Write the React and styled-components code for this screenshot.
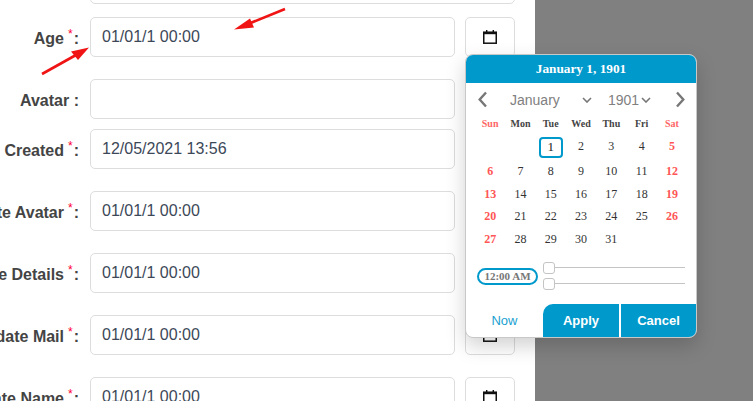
import React from "react";
import styled, { createGlobalStyle } from "styled-components";

const Global = createGlobalStyle`
  html, body { margin: 0; padding: 0; background: #fff; }
  body { width: 753px; height: 401px; overflow: hidden; font-family: "Liberation Sans", Arial, sans-serif; }
`;
const Page = styled.div`
  position: relative; display: flex; width: 753px; height: 401px; overflow: hidden; background: #808080;
`;
const Panel = styled.div`
  width: 535px; height: 401px; background: #fff; overflow: hidden; flex: none;
`;
const Form = styled.div`
  display: flex; flex-direction: column; margin-top: -36px;
`;
const Row = styled.div`
  display: flex; align-items: center; height: 40px; margin-bottom: ${p => p.$gap}px;
`;
const Label = styled.label`
  width: 79px; height: 40px; margin-right: 11px; flex: none; align-self: flex-start; display: flex; justify-content: flex-end; white-space: nowrap;
  font-size: 16px; font-weight: 700; color: #444; line-height: 44px;
`;
const Star = styled.sup`
  color: #ff0033; font-size: 12px; font-weight: 400; line-height: 0; margin-left: 4px; margin-right: 1px;
  vertical-align: 6px;
`;
const Field = styled.div`
  box-sizing: border-box; width: ${p => p.$w}px; height: 40px; border: 1px solid #ddd; border-radius: 5px;
  padding: 0 11px; font-size: 16px; line-height: 38px; color: #3c4858; background: #fff; flex: none;
`;
const IconButton = styled.button`
  box-sizing: border-box; width: 50px; height: 40px; margin-left: 10px; border: 1px solid #ddd; border-radius: 5px;
  background: #fff; padding: 0; display: flex; align-items: center; justify-content: center; flex: none;
`;
const Arrows = styled.svg`
  position: absolute; left: 0; top: 0; pointer-events: none;
`;
const Popup = styled.div`
  position: absolute; left: 465px; top: 54px; width: 232px; height: 284px; box-sizing: border-box;
  background: #fff; border: 1px solid #c8c8c8; border-radius: 8px; overflow: hidden;
  box-shadow: 0 8px 20px rgba(0,0,0,.18); display: flex; flex-direction: column;
`;
const Title = styled.div`
  height: 28px; background: #0099cc; color: #fff; text-align: center; flex: none;
  font: 700 13.3px/27px "Liberation Serif", serif;
`;
const Nav = styled.div`
  display: flex; align-items: center; height: 33px; padding: 0 11px 0 12px; color: #777; flex: none;
`;
const Chevron = styled.svg`
  flex: none; display: block;
`;
const Select = styled.div`
  display: flex; align-items: center; justify-content: space-between; width: ${p => p.$w}px; margin-left: ${p => p.$ml}px;
  font-size: 14px; color: #808080; flex: none;
`;
const Spacer = styled.div`flex: 1;`;
const Grid = styled.div`
  display: grid; grid-template-columns: repeat(7, 30.3px); grid-template-rows: 21px 27px; grid-auto-rows: 22.5px; padding: 0 9px; flex: none; margin-top: -3.5px;
  font-family: "Liberation Serif", serif; font-size: 12px; color: #333; justify-items: center; align-items: center;
`;
const Head = styled.div`
  font-size: 10px; font-weight: 700; color: ${p => p.$red ? "#ff6666" : "#444"};
`;
const Day = styled.div`
  box-sizing: border-box; width: 24px; height: 21px; display: flex; align-items: center; justify-content: center;
  ${p => p.$first && !p.$sel && "margin-top:-2px;"}
  ${p => p.$red && "color:#ff5555;font-weight:700;"}
  ${p => p.$sel && "border:2px solid #0099cc;border-radius:4px;font-size:13px;color:#222;"}
`;
const TimeRow = styled.div`
  display: flex; align-items: center; padding: 0 11px; margin-top: 9px; height: 34px; flex: none;
`;
const TimeBadge = styled.div`
  box-sizing: border-box; width: 61px; height: 17px; border: 2px solid #0099cc; border-radius: 9px; flex: none;
  text-align: center; font: 700 11px/13px "Liberation Serif", serif; color: #777; white-space: nowrap;
`;
const Sliders = styled.div`
  display: flex; flex-direction: column; gap: 4px; margin: -2px 0 0 5px; width: 143px;
`;
const Slider = styled.div`
  height: 12px; display: flex; align-items: center; position: relative;
  &::before { content: ""; flex: 1; height: 1px; background: #c4c4c4; }
`;
const Thumb = styled.div`
  position: absolute; left: 0; top: 0; box-sizing: border-box; width: 12px; height: 12px; border: 1px solid #c4c4c4;
  border-radius: 3px; background: #fff;
`;
const Footer = styled.div`
  display: flex; height: 33px; margin-top: auto; flex: none;
`;
const NowButton = styled.div`
  width: 77px; text-align: center; color: #1a9fd0; font-size: 13px; line-height: 33px;
`;
const ActionButton = styled.div`
  flex: ${p => p.$w ? `0 0 ${p.$w}px` : 1}; background: #0099cc; color: #fff; text-align: center; font-size: 13px; font-weight: 700;
  line-height: 33px; margin-left: ${p => p.$ml || 0}px; border-top-left-radius: ${p => p.$r || 0}px;
`;

const CalIcon = () => (
  <svg width="14" height="14" viewBox="0 0 14 14">
    <rect x="0.75" y="2.2" width="12.5" height="11" fill="none" stroke="#111" strokeWidth="1.5" />
    <rect x="0" y="2" width="14" height="2.2" fill="#111" />
    <rect x="3" y="0" width="1.4" height="3" fill="#111" />
    <rect x="9.6" y="0" width="1.4" height="3" fill="#111" />
  </svg>
);
const rows = [
  { label: "Age", star: true, value: "01/01/1 00:00", gap: 22 },
  { label: "Avatar", value: "", gap: 10 },
  { label: "Created", star: true, value: "12/05/2021 13:56", gap: 22 },
  { label: "Update Avatar", star: true, value: "01/01/1 00:00", gap: 22 },
  { label: "Update Details", star: true, value: "01/01/1 00:00", gap: 22 },
  { label: "Update Mail", star: true, value: "01/01/1 00:00", gap: 22 },
  { label: "Update Name", star: true, value: "01/01/1 00:00", gap: 0 },
];
const red = new Set([5, 6, 12, 13, 19, 20, 26, 27]);
const heads = ["Sun", "Mon", "Tue", "Wed", "Thu", "Fri", "Sat"];
const cells = [null, null, ...Array.from({ length: 31 }, (_, i) => i + 1)];
const Down = () => (
  <Chevron width="10" height="6" viewBox="0 0 10 6"><path d="M1 1l4 4 4-4" fill="none" stroke="#777" strokeWidth="1.6" /></Chevron>
);

export default function App() {
  return (
    <Page>
      <Global />
      <Panel>
        <Form>
          <Row $gap={13}><Label />
            <Field $w={425} />
          </Row>
          {rows.map(r => (
            <Row key={r.label} $gap={r.gap}>
              <Label><span>{r.label}{r.star ? <Star>*</Star> : " "}:</span></Label>
              <Field $w={365}>{r.value}</Field>
              <IconButton><CalIcon /></IconButton>
            </Row>
          ))}
        </Form>
      </Panel>
      <Arrows width="300" height="80" viewBox="0 0 300 80">
        <path d="M42 74L76 55" stroke="#f01414" strokeWidth="2.6" fill="none" />
        <path d="M89 47.5L71 51.5L78 60Z" fill="#f01414" />
        <path d="M285 9L248 24" stroke="#f01414" strokeWidth="2.6" fill="none" />
        <path d="M234 29.5L250 18.5L254 27.5Z" fill="#f01414" />
      </Arrows>
      <Popup>
        <Title>January 1, 1901</Title>
        <Nav>
          <Chevron width="9" height="17" viewBox="0 0 9 17"><path d="M8 1.5L1.7 8.5 8 15.5" fill="none" stroke="#777" strokeWidth="2.4" /></Chevron>
          <Select $w={82} $ml={23}><span>January</span><Down /></Select>
          <Select $w={43} $ml={16}><span>1901</span><Down /></Select>
          <Spacer />
          <Chevron width="9" height="17" viewBox="0 0 9 17"><path d="M1 1.5L7.3 8.5 1 15.5" fill="none" stroke="#777" strokeWidth="2.4" /></Chevron>
        </Nav>
        <Grid>
          {heads.map((h, i) => <Head key={h} $red={i === 0 || i === 6}>{h}</Head>)}
          {cells.map((d, i) => <Day key={i} $first={i < 7} $red={red.has(d)} $sel={d === 1}>{d}</Day>)}
        </Grid>
        <TimeRow>
          <TimeBadge>12:00 AM</TimeBadge>
          <Sliders>
            <Slider><Thumb /></Slider>
            <Slider><Thumb /></Slider>
          </Sliders>
        </TimeRow>
        <Footer>
          <NowButton>Now</NowButton>
          <ActionButton $w={76} $r={10}>Apply</ActionButton>
          <ActionButton $ml={2}>Cancel</ActionButton>
        </Footer>
      </Popup>
    </Page>
  );
}
